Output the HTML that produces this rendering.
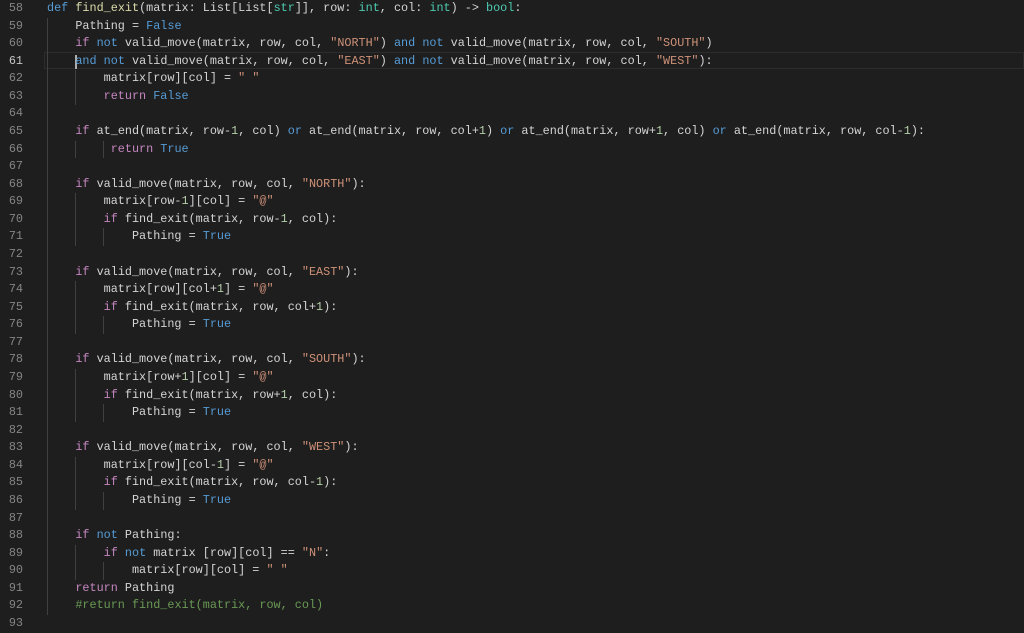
<!DOCTYPE html>
<html><head><meta charset="utf-8"><style>
body{margin:0;width:1024px;height:633px;background:#1e1e1e;overflow:hidden;position:relative;font-family:"Liberation Mono",monospace;font-size:11.8px;color:#d4d4d4}
.ln{position:absolute;left:0;width:23px;text-align:right;color:#858585;height:17.57px;line-height:17.57px}
.cd{position:absolute;left:47px;white-space:pre;height:17.57px;line-height:17.57px}
.g{position:absolute;width:1px;background:#404040}
.k{color:#569cd6}.c{color:#c586c0}.s{color:#ce9178}.n{color:#b5cea8}.t{color:#4ec9b0}.m{color:#6a9955}.f{color:#dcdcaa}
</style></head><body>
<div style="position:absolute;left:44px;top:52px;width:980px;height:17px;border:1px solid #2c2c2c;box-sizing:border-box"></div>
<div id="g"></div>
<div id="c"></div>
<script>
var L=[
'<span class="k">def</span> <span class="f">find_exit</span>(matrix: List[List[<span class="t">str</span>]], row: <span class="t">int</span>, col: <span class="t">int</span>) -&gt; <span class="t">bool</span>:',
'    Pathing = <span class="k">False</span>',
'    <span class="c">if</span> <span class="k">not</span> valid_move(matrix, row, col, <span class="s">"NORTH"</span>) <span class="k">and</span> <span class="k">not</span> valid_move(matrix, row, col, <span class="s">"SOUTH"</span>)',
'    <span class="k">and</span> <span class="k">not</span> valid_move(matrix, row, col, <span class="s">"EAST"</span>) <span class="k">and</span> <span class="k">not</span> valid_move(matrix, row, col, <span class="s">"WEST"</span>):',
'        matrix[row][col] = <span class="s">" "</span>',
'        <span class="c">return</span> <span class="k">False</span>',
'',
'    <span class="c">if</span> at_end(matrix, row-<span class="n">1</span>, col) <span class="k">or</span> at_end(matrix, row, col+<span class="n">1</span>) <span class="k">or</span> at_end(matrix, row+<span class="n">1</span>, col) <span class="k">or</span> at_end(matrix, row, col-<span class="n">1</span>):',
'         <span class="c">return</span> <span class="k">True</span>',
'',
'    <span class="c">if</span> valid_move(matrix, row, col, <span class="s">"NORTH"</span>):',
'        matrix[row-<span class="n">1</span>][col] = <span class="s">"@"</span>',
'        <span class="c">if</span> find_exit(matrix, row-<span class="n">1</span>, col):',
'            Pathing = <span class="k">True</span>',
'',
'    <span class="c">if</span> valid_move(matrix, row, col, <span class="s">"EAST"</span>):',
'        matrix[row][col+<span class="n">1</span>] = <span class="s">"@"</span>',
'        <span class="c">if</span> find_exit(matrix, row, col+<span class="n">1</span>):',
'            Pathing = <span class="k">True</span>',
'',
'    <span class="c">if</span> valid_move(matrix, row, col, <span class="s">"SOUTH"</span>):',
'        matrix[row+<span class="n">1</span>][col] = <span class="s">"@"</span>',
'        <span class="c">if</span> find_exit(matrix, row+<span class="n">1</span>, col):',
'            Pathing = <span class="k">True</span>',
'',
'    <span class="c">if</span> valid_move(matrix, row, col, <span class="s">"WEST"</span>):',
'        matrix[row][col-<span class="n">1</span>] = <span class="s">"@"</span>',
'        <span class="c">if</span> find_exit(matrix, row, col-<span class="n">1</span>):',
'            Pathing = <span class="k">True</span>',
'',
'    <span class="c">if</span> <span class="k">not</span> Pathing:',
'        <span class="c">if</span> <span class="k">not</span> matrix [row][col] == <span class="s">"N"</span>:',
'            matrix[row][col] = <span class="s">" "</span>',
'    <span class="c">return</span> Pathing',
'    <span class="m">#return find_exit(matrix, row, col)</span>',
''];
var H=17.57,h='';
for(var i=0;i<L.length;i++){var y=(i*H).toFixed(2);
h+='<div class="ln" style="top:'+y+'px;'+(i==3?'color:#c6c6c6':'')+'">'+(58+i)+'</div><div class="cd" style="top:'+y+'px">'+L[i]+'</div>';}
document.getElementById('c').innerHTML=h;
var G=[[47,59,92],[75,62,63],[75,66,66],[103,66,66],[75,69,71],[103,71,71],[75,74,76],[103,76,76],[75,79,81],[103,81,81],[75,84,86],[103,86,86],[75,89,90],[103,90,90]];
var g='';G.forEach(function(a){g+='<div class="g" style="left:'+a[0]+'px;top:'+((a[1]-58)*H).toFixed(2)+'px;height:'+((a[2]-a[1]+1)*H).toFixed(2)+'px"></div>';});
g+='<div class="g" style="left:75px;top:'+(3*H+2).toFixed(2)+'px;height:14px;background:#aeafad;width:2px"></div>';
document.getElementById('g').innerHTML=g;
</script>
</body></html>
